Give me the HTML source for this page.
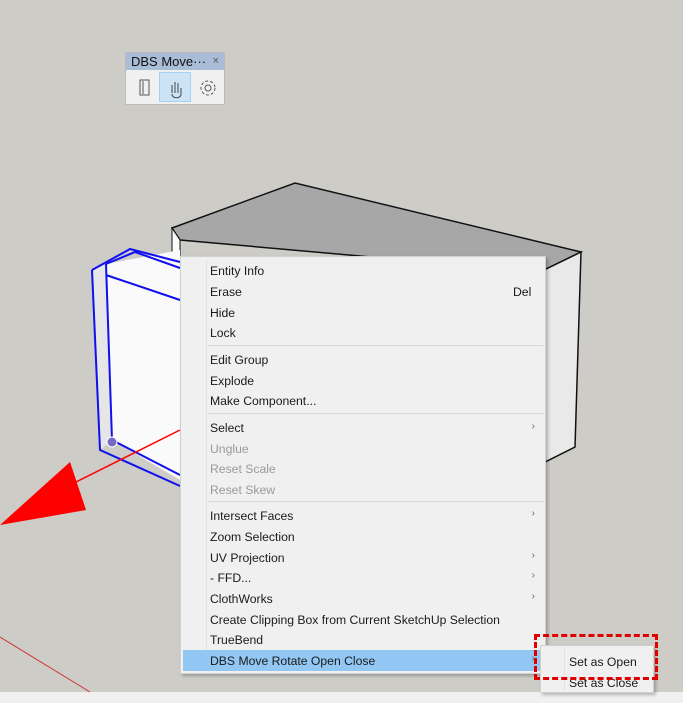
<!DOCTYPE html><html><head><style>
body{margin:0;width:683px;height:703px;overflow:hidden;background:#cdccc7;font-family:"Liberation Sans",sans-serif;position:relative}
.m{position:absolute;left:180px;top:256px;width:364px;height:416px;background:#f0f0f0;border:1px solid #d0d0d0;box-shadow:2px 2px 3px rgba(0,0,0,.25)}
.m .col{position:absolute;left:25px;top:2px;bottom:2px;border-left:1px solid #e2e2e2}
.i{position:absolute;left:29px;font-size:12.2px;color:#1a1a1a;line-height:14px}
.d{color:#9a9a9a}
.s{position:absolute;left:27px;right:2px;height:1px;background:#d8d8d8}
.a{position:absolute;right:10px;font-size:10px;color:#666}
</style></head><body>
<svg width="683" height="703" style="position:absolute;left:0;top:0">
<polygon points="172,228 295,183 581,252 540,272 180,240" fill="#a7a7a7" stroke="#111" stroke-width="1.5"/>
<polygon points="581,252 575,447 545,462 540,272" fill="#e9e9e9" stroke="#111" stroke-width="1.5"/>
<polygon points="172,228 180,240 180,256 172,256" fill="#fafafa" stroke="#111"/>
<polygon points="92,270 106,264 112,440 100,450" fill="#e6e6e6"/>
<polygon points="106,264 180,250 180,480 112,440" fill="#fafafa"/>
<g stroke="#1010ee" stroke-width="2" fill="none">
<polyline points="92,270 130,249 180,262"/><polyline points="106,264 135,252 180,268"/>
<polyline points="92,270 100,450 180,486"/><polyline points="106,264 112,440 180,475"/>
<line x1="106" y1="275" x2="180" y2="300"/></g>
<line x1="180" y1="430" x2="60" y2="490" stroke="#f00" stroke-width="1.5"/>
<polygon points="0,525 70,462 86,510" fill="#f00"/>
<line x1="0" y1="637" x2="90" y2="692" stroke="#c33" stroke-width="1"/>
<circle cx="112" cy="442" r="5" fill="#7a6ac8" stroke="#fff"/>
</svg>
<div style="position:absolute;left:0;top:692px;width:683px;height:11px;background:#f0f0f0"></div>
<div style="position:absolute;left:125px;top:52px;width:98px;height:51px;background:#f0f0f0;border:1px solid #bbb">
<div style="height:17px;background:#a9bdd6;font-size:13px;line-height:17px;padding-left:5px;color:#111">DBS Move···<span style="position:absolute;right:5px;font-size:11px;color:#555">×</span></div>
<div style="position:absolute;left:33px;top:19px;width:32px;height:30px;background:#cde4f7;border:1px solid #a8d0f0;box-sizing:border-box"></div>
<svg style="position:absolute;left:0;top:18px" width="98" height="33"><rect x="14" y="9" width="9" height="15" fill="none" stroke="#555"/><line x1="17" y1="10" x2="17" y2="23" stroke="#555"/><path d="M46 22v-8m3 8v-11m3 11v-10m3 11v-6m-9 6c0 5 9 5 9 0" fill="none" stroke="#444"/><circle cx="82" cy="17" r="3" fill="none" stroke="#555"/><circle cx="82" cy="17" r="7" fill="none" stroke="#555" stroke-dasharray="3 2"/></svg>
</div>
<div class="m"><div class="col"></div>
<div class="i" style="top:7px">Entity Info</div>
<div class="i" style="top:28px">Erase</div><div class="i" style="top:28px;left:332px">Del</div>
<div class="i" style="top:49px">Hide</div>
<div class="i" style="top:69px">Lock</div>
<div class="s" style="top:88px"></div>
<div class="i" style="top:96px">Edit Group</div>
<div class="i" style="top:117px">Explode</div>
<div class="i" style="top:137px">Make Component...</div>
<div class="s" style="top:156px"></div>
<div class="i" style="top:164px">Select</div><div class="a" style="top:164px">›</div>
<div class="i d" style="top:185px">Unglue</div>
<div class="i d" style="top:205px">Reset Scale</div>
<div class="i d" style="top:226px">Reset Skew</div>
<div class="s" style="top:244px"></div>
<div class="i" style="top:252px">Intersect Faces</div><div class="a" style="top:251px">›</div>
<div class="i" style="top:273px">Zoom Selection</div>
<div class="i" style="top:294px">UV Projection</div><div class="a" style="top:293px">›</div>
<div class="i" style="top:314px">- FFD...</div><div class="a" style="top:313px">›</div>
<div class="i" style="top:335px">ClothWorks</div><div class="a" style="top:334px">›</div>
<div class="i" style="top:356px">Create Clipping Box from Current SketchUp Selection</div>
<div class="i" style="top:376px">TrueBend</div>
<div style="position:absolute;left:2px;right:2px;top:393px;height:21px;background:#92c7f3"></div>
<div class="i" style="top:397px">DBS Move Rotate Open Close</div><div class="a" style="top:396px">›</div>
</div>
<div style="position:absolute;left:540px;top:645px;width:112px;height:46px;background:#f0f0f0;border:1px solid #d0d0d0;box-shadow:2px 2px 3px rgba(0,0,0,.25)">
<div style="position:absolute;left:23px;top:2px;bottom:2px;border-left:1px solid #e2e2e2"></div>
<div class="i" style="top:9px;left:28px">Set as Open</div>
<div class="i" style="top:30px;left:28px">Set as Close</div></div>
<div style="position:absolute;left:534px;top:634px;width:118px;height:40px;border:3px dashed #e00000"></div>
</body></html>
